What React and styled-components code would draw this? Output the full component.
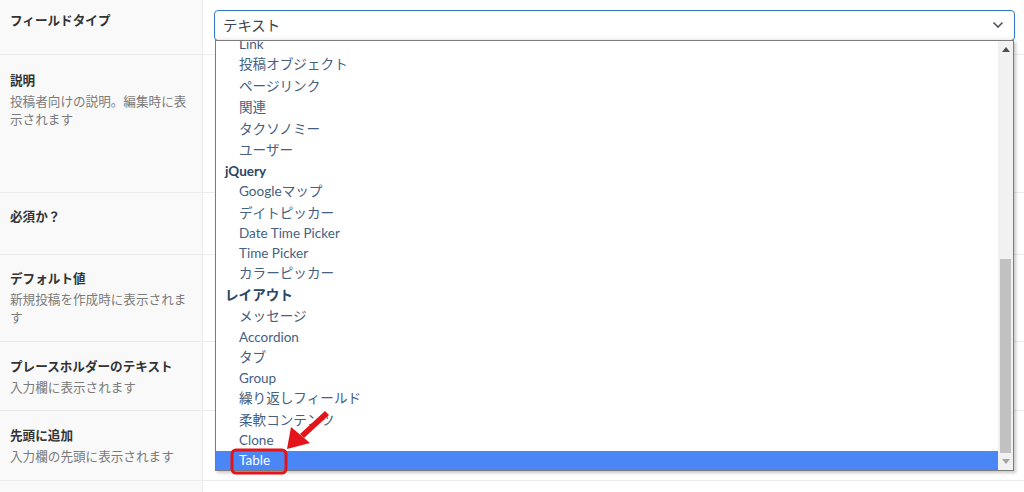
import React from 'react';
import styled, { createGlobalStyle } from 'styled-components';

const GlobalStyle = createGlobalStyle`
  html, body {
    margin: 0;
    padding: 0;
    background: #ffffff;
  }
  body {
    font-family: "Lato", "Noto Sans CJK JP", sans-serif;
  }
`;

// Datos
const filas = [
  { label: 'フィールドタイプ', h: 55, pad: 11, field: true },
  { label: '説明', desc: '投稿者向けの説明。編集時に表示されます', h: 138, pad: 16 },
  { label: '必須か？', h: 62, pad: 14 },
  { label: 'デフォルト値', desc: '新規投稿を作成時に表示されます', h: 87, pad: 14 },
  { label: 'プレースホルダーのテキスト', desc: '入力欄に表示されます', h: 69, pad: 15 },
  { label: '先頭に追加', desc: '入力欄の先頭に表示されます', h: 70, pad: 15 },
  { label: '', h: 40, pad: 14 },
];

const opciones = [
  { t: 'Link' },
  { t: '投稿オブジェクト', jp: true },
  { t: 'ページリンク', jp: true },
  { t: '関連', jp: true },
  { t: 'タクソノミー', jp: true },
  { t: 'ユーザー', jp: true },
  { t: 'jQuery', group: true },
  { t: 'Googleマップ', jp: true },
  { t: 'デイトピッカー', jp: true },
  { t: 'Date Time Picker' },
  { t: 'Time Picker' },
  { t: 'カラーピッカー', jp: true },
  { t: 'レイアウト', group: true, jp: true },
  { t: 'メッセージ', jp: true },
  { t: 'Accordion' },
  { t: 'タブ', jp: true },
  { t: 'Group' },
  { t: '繰り返しフィールド', jp: true },
  { t: '柔軟コンテンツ', jp: true },
  { t: 'Clone' },
  { t: 'Table', selected: true },
];

const App = () => {
  return (
    <>
      <GlobalStyle />
      <StyPagina>
        {filas.map((fila, i) => (
          <StyFila key={i} $h={fila.h}>
            <StyEtiqueta $pad={fila.pad}>
              {fila.label && <h4>{fila.label}</h4>}
              {fila.desc && <p>{fila.desc}</p>}
            </StyEtiqueta>
            <StyCampo>
              {fila.field && (
                <StySelect>
                  <span>テキスト</span>
                  <svg width="12" height="8" viewBox="0 0 12 8">
                    <path d="M1.5 1.5 L6 6 L10.5 1.5" fill="none" stroke="#50575e" strokeWidth="1.6" />
                  </svg>
                  <StyMenu>
                    <StyLista>
                      <StyItems>
                        {opciones.map((o) => (
                          <StyOpcion
                            key={o.t}
                            $jp={o.jp}
                            $group={o.group}
                            $selected={o.selected}
                          >
                            {o.t}
                          </StyOpcion>
                        ))}
                      </StyItems>
                    </StyLista>
                    <StyScroll>
                      <StyFlecha>
                        <svg width="8" height="5" viewBox="0 0 8 5">
                          <path d="M0 5 L4 0 L8 5 Z" fill="#505050" />
                        </svg>
                      </StyFlecha>
                      <StyPista>
                        <StyPulgar />
                      </StyPista>
                      <StyFlecha>
                        <svg width="8" height="5" viewBox="0 0 8 5">
                          <path d="M0 0 L4 5 L8 0 Z" fill="#a3a3a3" />
                        </svg>
                      </StyFlecha>
                    </StyScroll>
                  </StyMenu>
                </StySelect>
              )}
            </StyCampo>
          </StyFila>
        ))}
        {/* Anotación */}
        <StyAnotacion width="1024" height="492" viewBox="0 0 1024 492">
          <rect x="232" y="450" width="54" height="23" rx="4" fill="none" stroke="#e3141a" strokeWidth="3" />
          <polygon points="325,411 329,415 304,438 300,434" fill="#e3141a" />
          <polygon points="287,449 291,427 310,443" fill="#e3141a" />
        </StyAnotacion>
      </StyPagina>
    </>
  );
};

// Estilo

const StyPagina = styled.div`
  position: relative;
  width: 1024px;
  height: 492px;
  overflow: hidden;
  background: #ffffff;
`;

const StyFila = styled.div`
  display: grid;
  grid-template-columns: 203px 1fr;
  height: ${(p) => p.$h}px;
  box-sizing: border-box;
  border-bottom: 1px solid #ececec;
`;

const StyEtiqueta = styled.div`
  background: #f9f9f9;
  border-right: 1px solid #ececec;
  padding: ${(p) => p.$pad}px 12px 0 10px;
  font-family: "Noto Sans CJK JP", sans-serif;

  h4 {
    margin: 0;
    font-size: 12.6px;
    line-height: 17px;
    font-weight: 700;
    color: #333333;
  }

  p {
    margin: 4px 0 0;
    font-size: 12.6px;
    line-height: 17.5px;
    color: #7a7a7a;
  }
`;

const StyCampo = styled.div`
  padding: 10px 9px 0 11px;
`;

const StySelect = styled.div`
  position: relative;
  height: 31px;
  box-sizing: border-box;
  border: 1px solid #2f7bbf;
  border-radius: 4px;
  background: #ffffff;
  box-shadow: inset 0 -4px 4px -3px rgba(0, 0, 0, 0.08);
  display: flex;
  align-items: center;
  justify-content: space-between;
  padding: 0 10px 2px 8px;

  span {
    font-family: "Noto Sans CJK JP", sans-serif;
    font-size: 14.4px;
    color: #3c434a;
  }
`;

const StyMenu = styled.div`
  position: absolute;
  top: 29px;
  left: 0px;
  width: 799px;
  height: 431px;
  box-sizing: border-box;
  border: 1px solid #7c7c7c;
  background: #ffffff;
  box-shadow: 2px 2px 3px rgba(0, 0, 0, 0.22);
  display: flex;
  z-index: 2;
`;

const StyLista = styled.div`
  flex: 1;
  overflow: hidden;
  display: flex;
  flex-direction: column;
  justify-content: flex-end;
`;

const StyItems = styled.div`
  display: flex;
  flex-direction: column;
`;

const StyOpcion = styled.div`
  height: ${(p) => (p.$jp ? 21.5 : 19.5)}px;
  line-height: ${(p) => (p.$jp ? 21.5 : 19.5)}px;
  flex-shrink: 0;
  padding-left: ${(p) => (p.$group ? 9 : 23)}px;
  font-family: "Lato", "Noto Sans CJK JP", sans-serif;
  font-size: ${(p) => (p.$jp ? 13.6 : 13.5)}px;
  font-weight: ${(p) => (p.$group ? 700 : 400)};
  color: ${(p) => (p.$selected ? '#ffffff' : p.$group ? '#2b4566' : '#46607f')};
  background: ${(p) => (p.$selected ? '#4a86f6' : 'transparent')};
  white-space: nowrap;
`;

const StyScroll = styled.div`
  width: 15px;
  background: #f1f1f1;
  display: flex;
  flex-direction: column;
`;

const StyFlecha = styled.div`
  height: 17px;
  display: flex;
  align-items: center;
  justify-content: center;
`;

const StyPista = styled.div`
  flex: 1;
  display: flex;
  flex-direction: column;
  justify-content: flex-end;
  align-items: center;
`;

const StyPulgar = styled.div`
  width: 11px;
  height: 194px;
  background: #c1c1c1;
`;

const StyAnotacion = styled.svg`
  position: absolute;
  top: 0;
  left: 0;
  pointer-events: none;
  z-index: 3;
`;

export default App;
